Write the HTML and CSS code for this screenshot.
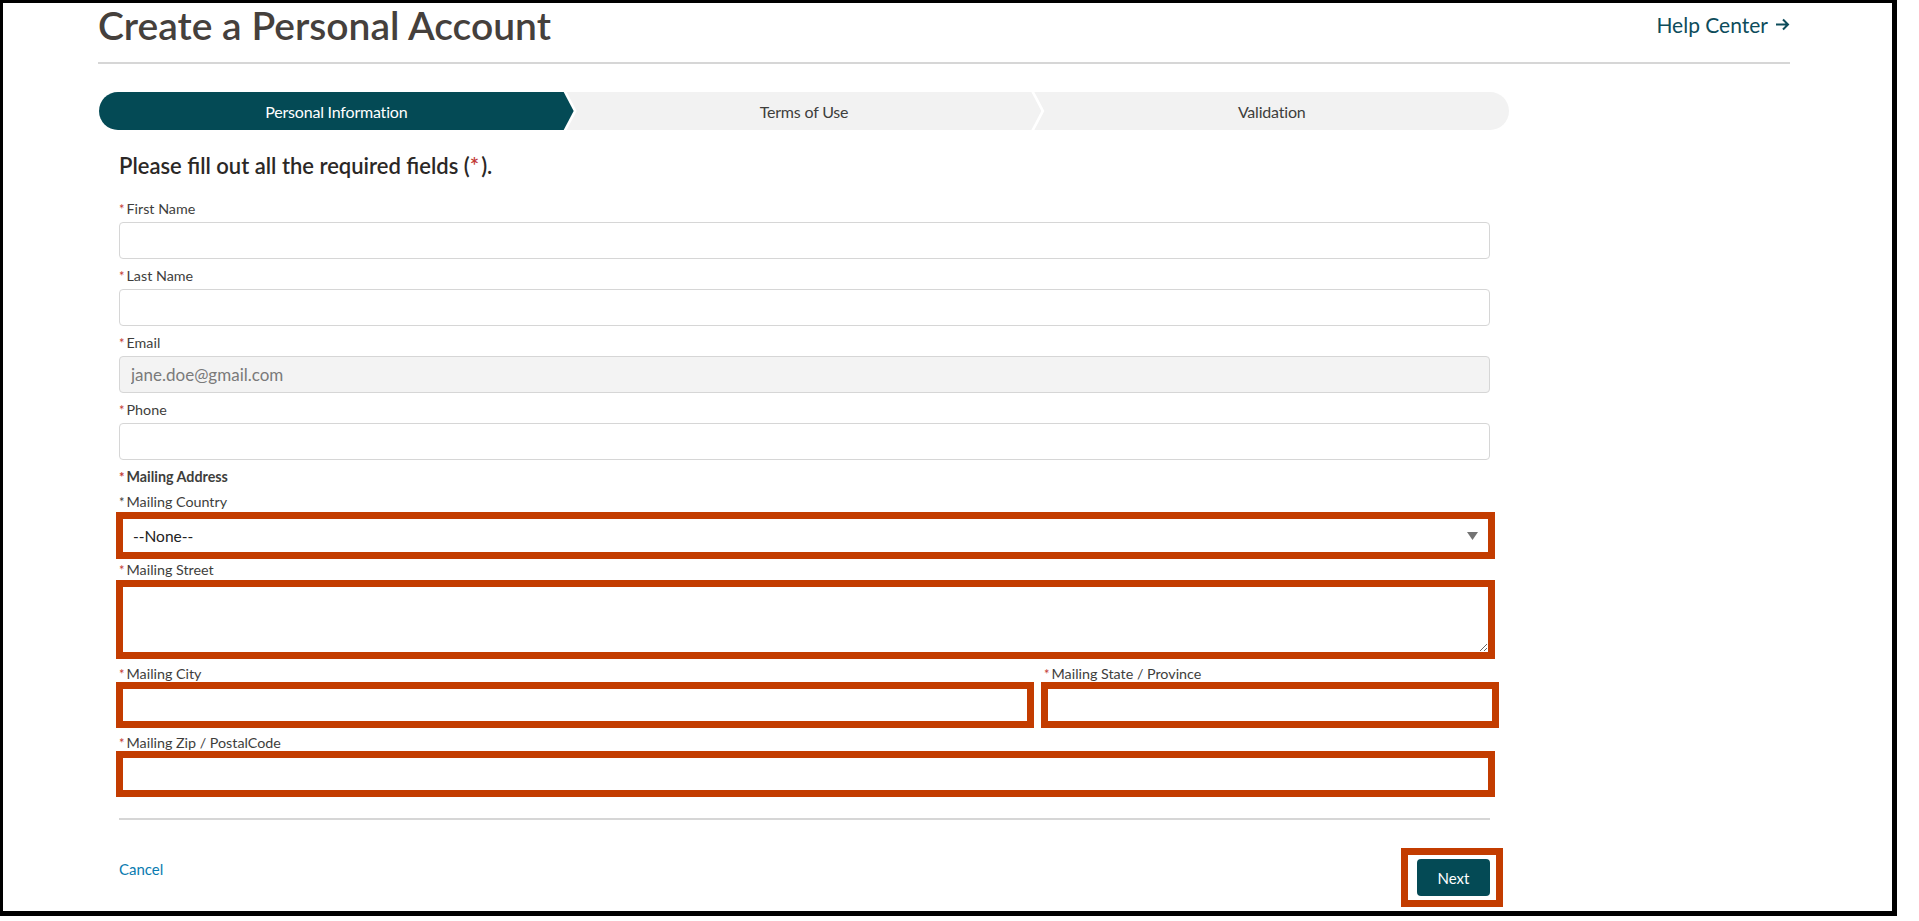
FILE: index.html
```html
<!DOCTYPE html>
<html lang="en">
<head>
  <meta charset="UTF-8">
  <meta name="viewport" content="width=device-width, initial-scale=1.0">
  <title>Create a Personal Account</title>
  <link rel="stylesheet" href="styles.css">
</head>
<body>
  <div class="frame">
    <header class="top">
      <h1 class="title">Create a Personal Account</h1>
      <a class="help" href="#">Help Center
        <svg class="help-arrow" width="15" height="13" viewBox="0 0 15 13"><path d="M1 6.5h12M8 1.5l5 5-5 5" fill="none" stroke="currentColor" stroke-width="2"/></svg>
      </a>
    </header>
    <div class="rule"></div>

    <ol class="steps">
      <li class="step">Personal Information</li>
      <li class="step">Terms of Use</li>
      <li class="step">Validation</li>
    </ol>

    <form class="form">
      <h2 class="intro">Please fill out all the required fields (<span class="req">*</span>).</h2>

      <div class="field">
        <label><span class="req">*</span>First Name</label>
        <input class="input" type="text">
      </div>
      <div class="field">
        <label><span class="req">*</span>Last Name</label>
        <input class="input" type="text">
      </div>
      <div class="field">
        <label><span class="req">*</span>Email</label>
        <input class="input input-locked" type="text" value="jane.doe@gmail.com" readonly>
      </div>
      <div class="field">
        <label><span class="req">*</span>Phone</label>
        <input class="input" type="text">
      </div>

      <div class="group-label"><span class="req">*</span>Mailing Address</div>

      <div class="field field-country">
        <label><span class="req-dark">*</span>Mailing Country</label>
        <div class="select-wrap">
          <select class="input hl select">
            <option>--None--</option>
          </select>
          <svg class="caret" width="11" height="8" viewBox="0 0 11 8"><path d="M0 0h11L5.5 8z" fill="#747474"/></svg>
        </div>
      </div>
      <div class="field field-street">
        <label><span class="req">*</span>Mailing Street</label>
        <textarea class="input hl street"></textarea>
      </div>

      <div class="row">
        <div class="field field-city">
          <label><span class="req">*</span>Mailing City</label>
          <input class="input hl short city" type="text">
        </div>
        <div class="field field-city">
          <label><span class="req">*</span>Mailing State / Province</label>
          <input class="input hl short state" type="text">
        </div>
      </div>

      <div class="field field-zip">
        <label><span class="req">*</span>Mailing Zip / PostalCode</label>
        <input class="input hl short" type="text">
      </div>

      <div class="form-rule"></div>

      <div class="actions">
        <a class="cancel" href="#">Cancel</a>
        <div class="next-hl">
          <button type="button" class="next">Next</button>
        </div>
      </div>
    </form>
  </div>
</body>
</html>
```

FILE: styles.css
```css
body {
  margin: 0;
  background-color: white;
  font-family: Lato, "Noto Sans", sans-serif;
  color: #3e3e3c;
}
.frame {
  box-sizing: border-box;
  width: 1897px;
  height: 916px;
  border-style: solid;
  border-color: #000;
  border-width: 3px 5px 5px 3px;
  overflow: hidden;
}
.top {
  display: flex;
  justify-content: space-between;
  align-items: center;
  margin-left: 95px;
  width: 1692px;
  height: 44px;
}
.title {
  margin: 0;
  font-size: 39px;
  line-height: 44px;
  font-weight: 600;
  color: #45403c;
}
.help {
  display: flex;
  align-items: center;
  gap: 7px;
  font-size: 21px;
  color: #0d4c5b;
  text-decoration: none;
  margin-top: -2px;
}
.rule {
  margin: 15px 0 0 95px;
  width: 1692px;
  height: 2px;
  background-color: #d6d6d6;
}
.steps {
  list-style: none;
  margin: 28px 0 0 96px;
  padding: 0;
  width: 1410px;
  height: 38px;
  display: flex;
  border-radius: 19px;
  overflow: hidden;
}
.step {
  flex: 1;
  display: flex;
  align-items: center;
  justify-content: center;
  margin-left: -7px;
  background-color: #f2f2f2;
  color: #3e3e3c;
  font-size: 16px;
  letter-spacing: -0.2px;
  clip-path: polygon(0 0, calc(100% - 10px) 0, 100% 50%, calc(100% - 10px) 100%, 0 100%, 10px 50%);
}
.step:first-child {
  margin-left: 0;
  background-color: #044a55;
  color: white;
  clip-path: polygon(0 0, calc(100% - 10px) 0, 100% 50%, calc(100% - 10px) 100%, 0 100%);
}
.step:last-child {
  clip-path: polygon(0 0, 100% 0, 100% 100%, 0 100%, 10px 50%);
}
.form {
  margin-left: 116px;
  width: 1371px;
}
.intro {
  margin: 22px 0 21px;
  font-size: 22px;
  line-height: 28px;
  font-weight: 600;
  color: #2b2826;
}
.req {
  color: #c23934;
  margin-right: 2px;
}
.req-dark {
  color: #3e3e3c;
  margin-right: 2px;
}
.field {
  margin-bottom: 9px;
}
.field label,
.group-label {
  display: block;
  height: 16px;
  overflow: visible;
  font-size: 14.3px;
  line-height: 16px;
  white-space: nowrap;
  margin-bottom: 5px;
}
.field label .req,
.group-label .req,
.field label .req-dark {
  font-size: 13px;
  line-height: 0;
}
.group-label {
  font-weight: bold;
  margin-bottom: 9px;
}
.input {
  display: block;
  box-sizing: border-box;
  width: 100%;
  height: 37px;
  padding: 0 11px;
  border: 1px solid #d6d6d6;
  border-radius: 4px;
  background-color: white;
  font-family: Lato, "Noto Sans", sans-serif;
  font-size: 17px;
  color: #3e3e3c;
  outline: none;
}
.input-locked {
  background-color: #f3f3f3;
  color: #7a7a7a;
}
.hl {
  border: 7px solid #c33c00;
  border-radius: 0;
  margin-left: -3px;
  width: calc(100% + 8px);
}
.field-country label,
.field-street label {
  margin-bottom: 2px;
}
.field-country {
  margin-bottom: 3px;
}
.select-wrap {
  position: relative;
}
.select {
  height: 47px;
  padding-left: 10px;
  appearance: none;
  -webkit-appearance: none;
  font-size: 15.5px;
  color: #222;
}
.caret {
  position: absolute;
  right: 12px;
  top: 20px;
}
.field-street {
  margin-bottom: 7px;
}
.street {
  height: 79px;
  resize: vertical;
}
.row {
  display: grid;
  grid-template-columns: 913px 1fr;
  column-gap: 12px;
}
.field-city {
  margin-bottom: 7px;
}
.field-city label,
.field-zip label {
  margin-bottom: 0;
}
.short {
  height: 46px;
}
.city {
  width: calc(100% + 5px);
}
.state {
  width: calc(100% + 12px);
}
.field-zip {
  margin-bottom: 0;
}
.form-rule {
  margin-top: 21px;
  height: 2px;
  background-color: #d6d6d6;
}
.actions {
  display: flex;
  justify-content: space-between;
  align-items: flex-start;
  margin-top: 28px;
}
.cancel {
  margin-top: 11px;
  font-size: 15px;
  line-height: 20px;
  color: #0a7bb0;
  text-decoration: none;
}
.next-hl {
  border: 7px solid #c33c00;
  padding: 4px 6px 4px 9px;
  margin-right: -13px;
}
.next {
  display: block;
  width: 73px;
  height: 37px;
  border: none;
  border-radius: 4px;
  background-color: #044a55;
  color: white;
  font-family: Lato, "Noto Sans", sans-serif;
  font-size: 15px;
  cursor: pointer;
}
```
